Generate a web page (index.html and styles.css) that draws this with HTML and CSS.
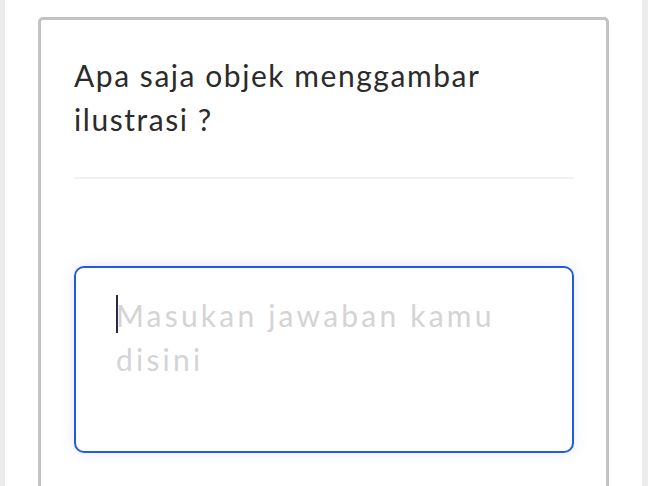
FILE: index.html
```html
<!DOCTYPE html>
<html lang="id">
<head>
<meta charset="utf-8">
<link rel="stylesheet" href="styles.css">
</head>
<body>
<div class="page">
  <div class="card">
    <p class="question">Apa saja objek menggambar ilustrasi ?</p>
    <hr class="divider">
    <div class="answer">
      <span class="caret"></span><span class="placeholder">Masukan jawaban kamu disini</span>
    </div>
  </div>
</div>
</body>
</html>
```

FILE: styles.css
```css
* { box-sizing: border-box; }
html, body { margin: 0; padding: 0; background: #ffffff; }
body { width: 648px; height: 486px; overflow: hidden; }
.page {
  height: 486px;
  border-left: 5px solid #ececec;
  border-right: 6px solid #ececec;
  padding: 17px 33px 0 33px;
  font-family: "Lato", "Noto Sans", sans-serif;
}
.card {
  height: 480px;
  border: 3px solid #c3c3c3;
  border-bottom-color: #e2e2e2;
  border-radius: 5px;
  padding: 33px 32px 0 33px;
}
.question {
  margin: 0;
  font-size: 30px;
  font-weight: 400;
  line-height: 44px;
  letter-spacing: 1.55px;
  color: #2b2b2b;
  width: 460px;
}
.divider {
  margin: 36px 0 0 0;
  border: 0;
  border-top: 2px solid #f1f1f1;
}
.answer {
  margin-top: 87px;
  height: 187px;
  border: 2px solid #2658e8;
  border-radius: 10px;
  box-shadow: 0 0 14px rgba(40, 90, 232, 0.13);
  padding: 25px 30px 0 40px;
  position: relative;
}
.placeholder {
  display: block;
  font-size: 30px;
  font-weight: 400;
  line-height: 44px;
  letter-spacing: 3.2px;
  color: #d4d4d4;
  width: 420px;
}
.caret {
  position: absolute;
  left: 40px;
  top: 27px;
  width: 2px;
  height: 38px;
  background: #2a2a4a;
}
```
